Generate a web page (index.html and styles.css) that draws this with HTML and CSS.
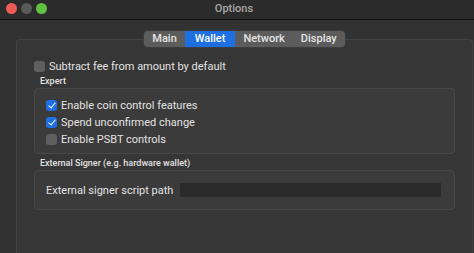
FILE: index.html
```html
<!DOCTYPE html>
<html lang="en">
<head>
    <meta charset="UTF-8">
    <title>Options</title>
    <link rel="stylesheet" href="styles.css">
</head>
<body>
    <div class="window">
        <div class="titlebar">
            <div class="lights">
                <span class="light red"></span>
                <span class="light grey"></span>
                <span class="light green"></span>
            </div>
            <div class="title">Options</div>
        </div>
        <div class="content">
            <div class="tabs">
                <span class="tab">Main</span>
                <span class="tab active">Wallet</span>
                <span class="tab">Network</span>
                <span class="tab">Display</span>
            </div>
            <div class="pane">
                <label class="check"><span class="box"></span>Subtract fee from amount by default</label>
                <div class="group-label">Expert</div>
                <div class="group expert">
                    <label class="check"><span class="box on"></span>Enable coin control features</label>
                    <label class="check"><span class="box on"></span>Spend unconfirmed change</label>
                    <label class="check"><span class="box"></span>Enable PSBT controls</label>
                </div>
                <div class="group-label">External Signer (e.g. hardware wallet)</div>
                <div class="group signer">
                    <span class="field-label">External signer script path</span>
                    <span class="input"></span>
                </div>
            </div>
        </div>
    </div>
</body>
</html>
```

FILE: styles.css
```css
* {
    box-sizing: border-box;
    margin: 0;
    padding: 0;
}
body {
    font-family: Roboto, "Noto Sans", sans-serif;
    background: #323232;
    color: #e2e2e2;
    width: 474px;
    height: 253px;
    overflow: hidden;
}
.window {
    height: 253px;
    display: flex;
    flex-direction: column;
}
.titlebar {
    height: 20px;
    background: #2b2b2b;
    border-bottom: 1px solid #121212;
    display: flex;
    align-items: center;
}
.lights {
    display: flex;
    gap: 4px;
    padding-left: 6px;
    margin-top: -2px;
}
.light {
    width: 11px;
    height: 11px;
    border-radius: 50%;
}
.light.red { background: #ec5b55; }
.light.grey { background: #595959; }
.light.green { background: #5fc142; }
.title {
    flex: 1;
    text-align: center;
    font-size: 11px;
    font-weight: 500;
    color: #a8a8a8;
    margin-left: -53px;
    margin-top: -2px;
}
.content {
    flex: 1;
    padding: 11px 1px 0 16px;
    display: flex;
    flex-direction: column;
}
.tabs {
    align-self: center;
    margin-left: 0;
    display: flex;
    background: #5c5c5c;
    border-radius: 4px;
    height: 16px;
    margin-bottom: -8px;
    position: relative;
    z-index: 1;
    overflow: hidden;
    box-shadow: 0 0 0 0.5px #444;
}
.tab {
    font-size: 11px;
    font-weight: 500;
    color: #e4e4e4;
    line-height: 16px;
    padding: 0 8px;
}
.tab.active {
    background: #1d6fe2;
    color: #fff;
    padding: 0 10px;
}
.pane {
    flex: 1;
    background: #363636;
    border: 1px solid #434343;
    border-bottom: none;
    border-radius: 4px 4px 0 0;
    padding: 18px 17px 0 17px;
}
.check {
    display: flex;
    align-items: center;
    font-size: 11px;
    height: 17px;
    gap: 4px;
}
.box {
    width: 11px;
    height: 11px;
    border-radius: 3px;
    background: #5f5f5f;
    display: flex;
    align-items: center;
    justify-content: center;
}
.box.on {
    background: #1e6fe4;
}
.box.on::after {
    content: "";
    width: 3px;
    height: 6px;
    border: solid #fff;
    border-width: 0 1.6px 1.6px 0;
    transform: rotate(40deg);
    margin-top: -2px;
}
.group-label {
    font-size: 9px;
    font-weight: 500;
    padding-left: 6px;
    height: 13px;
    line-height: 12px;
}
.group {
    background: #3b3b3b;
    border: 1px solid #484848;
    border-radius: 4px;
}
.expert {
    height: 66px;
    margin-bottom: 3px;
    padding: 8px 11px 0 11px;
}
.signer {
    height: 40px;
    display: flex;
    align-items: center;
    padding: 0 13px 0 11px;
    gap: 7px;
}
.field-label {
    font-size: 11px;
}
.input {
    flex: 1;
    height: 14px;
    background: #2a2a2a;
}
```
